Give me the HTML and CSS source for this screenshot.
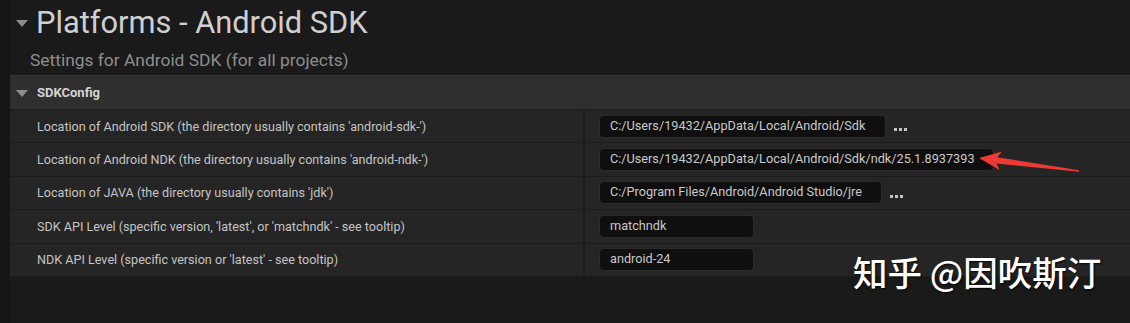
FILE: index.html
```html
<!DOCTYPE html>
<html>
<head>
<meta charset="utf-8">
<link rel="stylesheet" href="styles.css">
</head>
<body>
<div class="page">
  <div class="gutter"></div>
  <div class="main">
    <div class="header">
      <div class="title-row">
        <span class="tri"></span>
        <h1 class="title">Platforms - Android SDK</h1>
      </div>
      <div class="subtitle">Settings for Android SDK (for all projects)</div>
    </div>
    <div class="category">
      <span class="tri"></span>
      <span class="cat-name">SDKConfig</span>
    </div>
    <div class="rows">
      <div class="row">
        <div class="label">Location of Android SDK (the directory usually contains 'android-sdk-')</div>
        <div class="value">
          <div class="box w287">C:/Users/19432/AppData/Local/Android/Sdk</div>
          <div class="dots"><i></i><i></i><i></i></div>
        </div>
      </div>
      <div class="row">
        <div class="label">Location of Android NDK (the directory usually contains 'android-ndk-')</div>
        <div class="value">
          <div class="box w395">C:/Users/19432/AppData/Local/Android/Sdk/ndk/25.1.8937393</div>
        </div>
      </div>
      <div class="row">
        <div class="label">Location of JAVA (the directory usually contains 'jdk')</div>
        <div class="value">
          <div class="box w283">C:/Program Files/Android/Android Studio/jre</div>
          <div class="dots"><i></i><i></i><i></i></div>
        </div>
      </div>
      <div class="row">
        <div class="label">SDK API Level (specific version, 'latest', or 'matchndk' - see tooltip)</div>
        <div class="value">
          <div class="box w155">matchndk</div>
        </div>
      </div>
      <div class="row">
        <div class="label">NDK API Level (specific version or 'latest' - see tooltip)</div>
        <div class="value">
          <div class="box w155">android-24</div>
        </div>
      </div>
    </div>
  </div>
</div>
<svg class="arrow" width="1130" height="323" viewBox="0 0 1130 323">
  <polygon points="979,158 1002,151.5 997.3,157.3 1079,170.3 1079,171.7 996.5,163.5 999.6,170" fill="#ee3a35"/>
</svg>
<div class="watermark">知乎 @因吹斯汀</div>
</body>
</html>
```

FILE: styles.css
```css
html, body {
  margin: 0;
  padding: 0;
  background: #1a1a1a;
  font-family: Roboto, "Liberation Sans", sans-serif;
  width: 1130px;
  height: 323px;
  overflow: hidden;
}

.page {
  display: flex;
  height: 323px;
}

.gutter {
  width: 10px;
  background: #151515;
  flex: none;
}

.main {
  flex: 1;
  display: flex;
  flex-direction: column;
}

.header {
  padding-top: 5px;
  height: 70px;
}

.title-row {
  display: flex;
  align-items: center;
  height: 36px;
}

.tri {
  width: 0;
  height: 0;
  border-left: 6px solid transparent;
  border-right: 6px solid transparent;
  border-top: 7px solid #8c8c8c;
  margin-left: 6px;
  flex: none;
}

.title {
  margin: 0 0 0 8px;
  font-size: 30.8px;
  font-weight: 400;
  line-height: 36px;
  color: #cfcfcf;
}

.subtitle {
  margin-top: 9px;
  padding-left: 20px;
  font-size: 17.4px;
  line-height: 20px;
  color: #8e8e8e;
}

.category {
  background: #2f2f2f;
  border-top: 1px solid #363636;
  display: flex;
  align-items: center;
  box-sizing: border-box;
  height: 34px;
}

.category .tri {
  margin-top: 1px;
}

.cat-name {
  margin-left: 9px;
  font-size: 13px;
  font-weight: 700;
  color: #d4d4d4;
}

.row {
  display: grid;
  grid-template-columns: 573px 1fr;
  height: 32.4px;
  border-top: 1px solid #1c1c1c;
  background: #252525;
}

.row:last-child {
  border-bottom: 1px solid #1c1c1c;
}

.label {
  padding-left: 27px;
  display: flex;
  align-items: center;
  font-size: 12.6px;
  color: #c4c4c4;
}

.value {
  border-left: 2px solid #1d1d1d;
  padding-left: 14px;
  display: flex;
  align-items: center;
}

.box {
  height: 23px;
  box-sizing: border-box;
  background: #0f0f0f;
  border: 1px solid #2c2c2c;
  border-radius: 4px;
  padding-left: 10px;
  font-size: 12.7px;
  line-height: 19px;
  color: #c9c9c9;
  white-space: nowrap;
}

.w287 { width: 287px; }
.w395 { width: 395px; }
.w283 { width: 283px; }
.w155 { width: 155px; }

.dots {
  display: flex;
  gap: 2px;
  margin-left: 8px;
  margin-top: 7px;
}

.dots i {
  display: block;
  width: 3px;
  height: 3px;
  background: #c4c4c4;
}

.arrow {
  position: absolute;
  left: 0;
  top: 0;
  pointer-events: none;
}

.watermark {
  position: absolute;
  left: 853px;
  top: 248px;
  font-family: "Noto Sans CJK SC", sans-serif;
  font-size: 34.5px;
  font-weight: 500;
  line-height: 46px;
  color: #ffffff;
  text-shadow: 1px 1px 2px rgba(0,0,0,0.9);
  white-space: nowrap;
}
```
